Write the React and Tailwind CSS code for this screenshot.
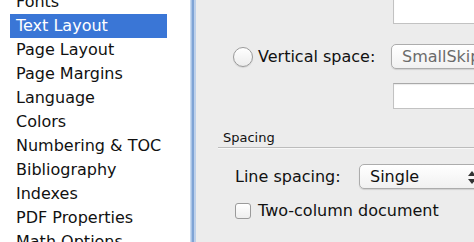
const items = [
  "Fonts",
  "Text Layout",
  "Page Layout",
  "Page Margins",
  "Language",
  "Colors",
  "Numbering & TOC",
  "Bibliography",
  "Indexes",
  "PDF Properties",
  "Math Options",
];

const TextField = ({ className }) => (
  <div
    className={`w-[120px] bg-white border border-[#c2c2c2] border-t-[#a9a9a9] shadow-[inset_0_1px_1px_rgba(0,0,0,0.08)] ${className}`}
  />
);

const PopUp = ({ label, dim, className }) => (
  <div
    className={`relative flex items-center w-[140px] rounded-[5px] border border-[#acacac] bg-linear-to-b from-white to-[#f1f1f1] shadow-[0_1px_1px_rgba(0,0,0,0.12)] ${className}`}
  >
    <span className={`pl-[10px] text-[16px] leading-none ${dim ? "text-[#6b6b6b]" : "text-[#111]"}`}>
      {label}
    </span>
    {!dim && (
      <svg className="absolute left-[108px] top-[6px]" width="8" height="13" viewBox="0 0 8 13">
        <path d="M4 0 L8 5 L0 5 Z" fill="#333" />
        <path d="M4 13 L8 8 L0 8 Z" fill="#333" />
      </svg>
    )}
  </div>
);

export default function App() {
  return (
    <div
      className="w-[474px] h-[242px] flex overflow-hidden bg-[#ececec] text-[#111]"
      style={{ fontFamily: '"DejaVu Sans", sans-serif' }}
    >
      {/* source list */}
      <div className="w-[190px] shrink-0 bg-white">
        <div className="-mt-[10px] flex flex-col">
          {items.map((name) => {
            const sel = name === "Text Layout";
            return (
              <div
                key={name}
                className={`ml-[10px] w-[157px] h-[24px] leading-[23px] pl-[6px] text-[16px] whitespace-nowrap ${
                  sel ? "bg-[#3a76d6] text-white" : ""
                }`}
              >
                {name}
              </div>
            );
          })}
        </div>
      </div>
      <div className="w-[6px] shrink-0 flex">
        <div className="w-px bg-[#c9dbf0]" />
        <div className="w-px bg-[#a9c3e6]" />
        <div className="w-[2px] bg-[#7fa4d5]" />
        <div className="w-[2px] bg-[#bdd0ea]" />
      </div>

      {/* settings pane */}
      <div className="flex-1 flex flex-col">
        <TextField className="ml-[197px] -mt-[6px] h-[30px]" />

        <div className="flex items-center mt-[20px] h-[25px]">
          <div className="ml-[37px] w-[20px] h-[20px] rounded-full border border-[#9a9a9a] bg-linear-to-b from-white to-[#ececec] shadow-[0_1px_1px_rgba(0,0,0,0.1)]" />
          <span className="ml-[5px] w-[133px] text-[16px]">Vertical space:</span>
          <PopUp label="SmallSkip" dim className="h-[25px]" />
        </div>

        <TextField className="ml-[197px] mt-[14px] h-[26px]" />

        <div className="ml-[27px] mt-[21px] text-[13px] leading-[16px]">Spacing</div>
        <div className="ml-[22px] mt-[1px] h-px bg-[#bcbcbc]" />
        <div className="ml-[22px] h-px bg-[#f8f8f8]" />

        <div className="flex items-center mt-[15px] h-[25px]">
          <span className="ml-[39px] w-[124px] text-[16px]">Line spacing:</span>
          <PopUp label="Single" className="h-[25px]" />
        </div>

        <div className="flex items-center mt-[13px] h-[18px]">
          <div className="ml-[39px] w-[16px] h-[16px] rounded-[3px] border border-[#9a9a9a] bg-linear-to-b from-white to-[#eeeeee]" />
          <span className="ml-[7px] text-[16px]">Two-column document</span>
        </div>
      </div>
    </div>
  );
}
